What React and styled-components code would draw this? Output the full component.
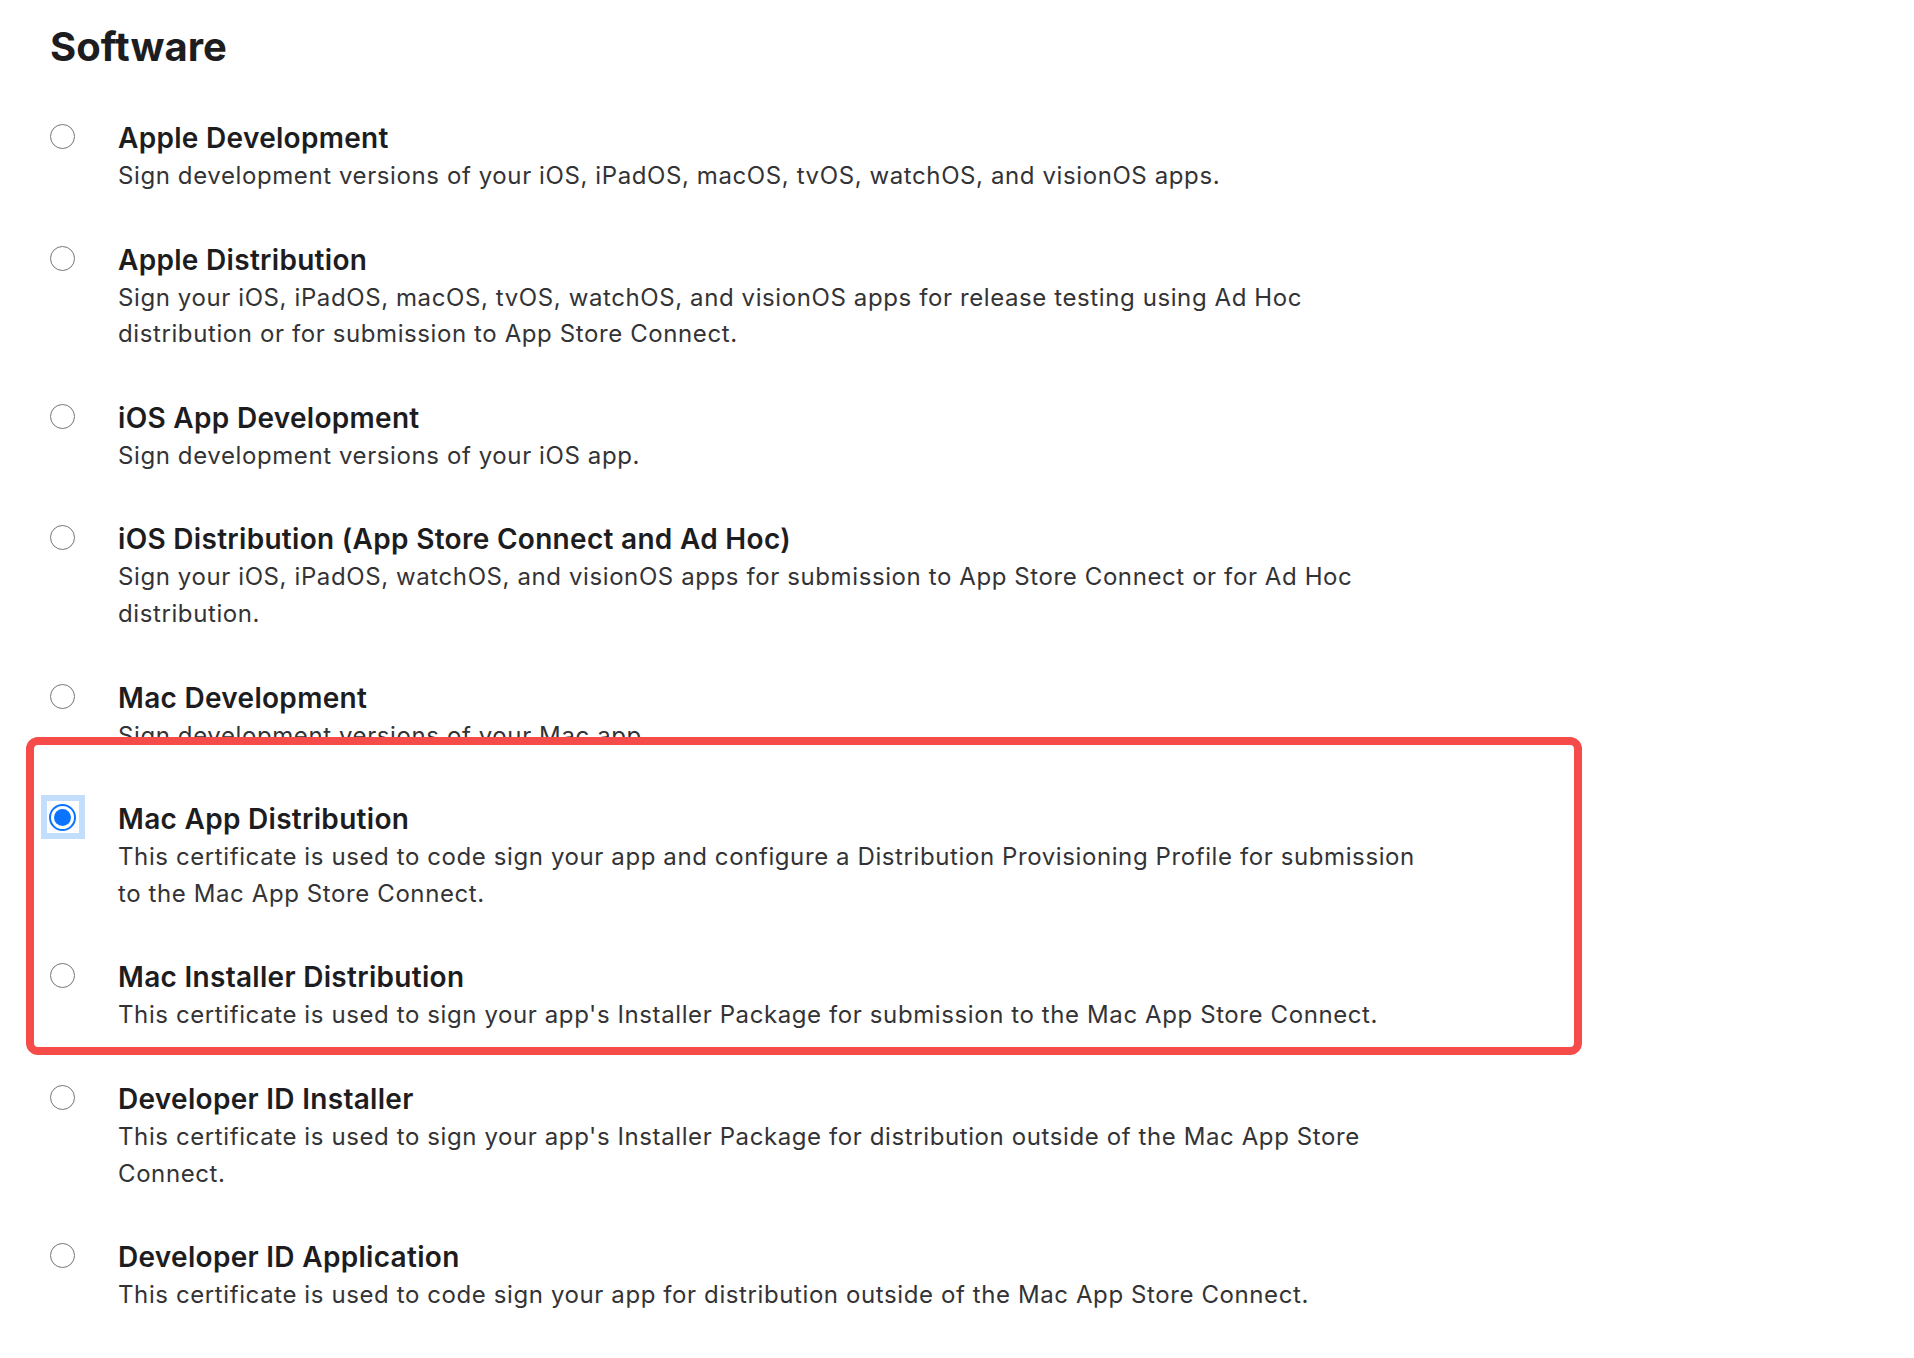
import styled, { createGlobalStyle } from "styled-components";

const GlobalStyle = createGlobalStyle`
    html, body {
        margin: 0;
        padding: 0;
        background: #fff;
    }

    body {
        font-family: Inter, "Noto Sans", "Liberation Sans", sans-serif;
        color: #1d1d1f;
        -webkit-font-smoothing: antialiased;
    }
`;

const Page = styled.div`
    width: 1914px;
    min-height: 1358px;
    padding: 22px 0 0 50px;
    box-sizing: border-box;
`;

const Heading = styled.h2`
    margin: 0 0 46px 0;
    font-size: 40px;
    line-height: 50px;
    font-weight: 700;
    color: #1d1d1f;
`;

const List = styled.div`
    display: flex;
    flex-direction: column;
    gap: 45px;
`;

const Highlight = styled.div`
    position: relative;
    display: flex;
    flex-direction: column;
    gap: 45px;
    width: 1556px;
    box-sizing: border-box;
    margin: -62px 0 -21px -24px;
    padding: 54px 0 13px 16px;
    background: #fff;
    border: 8px solid #f54b49;
    border-radius: 12px;
`;

const Row = styled.label`
    display: flex;
    align-items: flex-start;
    gap: 43px;
    cursor: pointer;
`;

const RadioSlot = styled.span`
    flex: 0 0 25px;
    min-width: 0;
    height: 25px;
    margin-top: 6px;
    display: flex;
    align-items: center;
    justify-content: center;
    position: relative;
`;

const Focus = styled.span`
    position: absolute;
    left: -9px;
    top: -10px;
    width: 44px;
    height: 44px;
    box-sizing: border-box;
    background: #fff;
    border: 6px solid #c3defd;
`;

const Radio = styled.span`
    position: relative;
    flex: none;
    width: ${(p) => (p.checked ? 27 : 25)}px;
    height: ${(p) => (p.checked ? 27 : 25)}px;
    box-sizing: border-box;
    border-radius: 50%;
    border: ${(p) => (p.checked ? "2px solid #0a74ff" : "1.8px solid #767676")};
    background: #fff;
    display: flex;
    align-items: center;
    justify-content: center;

    &::after {
        content: "";
        display: ${(p) => (p.checked ? "block" : "none")};
        width: 17px;
        height: 17px;
        border-radius: 50%;
        background: #0a74ff;
    }
`;

const Text = styled.div`
    display: flex;
    flex-direction: column;
`;

const Title = styled.div`
    font-size: 28px;
    line-height: 40px;
    font-weight: 600;
    letter-spacing: 0.3px;
    color: #1d1d1f;
`;

const Desc = styled.div`
    font-size: 24px;
    line-height: 36.6px;
    font-weight: 400;
    letter-spacing: 0.6px;
    color: #333336;
`;

const certs = [
    {
        title: "Apple Development",
        lines: ["Sign development versions of your iOS, iPadOS, macOS, tvOS, watchOS, and visionOS apps."],
    },
    {
        title: "Apple Distribution",
        lines: [
            "Sign your iOS, iPadOS, macOS, tvOS, watchOS, and visionOS apps for release testing using Ad Hoc",
            "distribution or for submission to App Store Connect.",
        ],
    },
    {
        title: "iOS App Development",
        lines: ["Sign development versions of your iOS app."],
    },
    {
        title: "iOS Distribution (App Store Connect and Ad Hoc)",
        lines: [
            "Sign your iOS, iPadOS, watchOS, and visionOS apps for submission to App Store Connect or for Ad Hoc",
            "distribution.",
        ],
    },
    {
        title: "Mac Development",
        lines: ["Sign development versions of your Mac app."],
    },
    {
        title: "Mac App Distribution",
        lines: [
            "This certificate is used to code sign your app and configure a Distribution Provisioning Profile for submission",
            "to the Mac App Store Connect.",
        ],
        checked: true,
        marked: true,
    },
    {
        title: "Mac Installer Distribution",
        lines: ["This certificate is used to sign your app's Installer Package for submission to the Mac App Store Connect."],
        marked: true,
    },
    {
        title: "Developer ID Installer",
        lines: [
            "This certificate is used to sign your app's Installer Package for distribution outside of the Mac App Store",
            "Connect.",
        ],
    },
    {
        title: "Developer ID Application",
        lines: ["This certificate is used to code sign your app for distribution outside of the Mac App Store Connect."],
    },
];

function CertRow({ el }) {
    return (
        <Row>
            <RadioSlot>
                {el.checked && <Focus />}
                <Radio checked={el.checked} />
            </RadioSlot>
            <Text>
                <Title>{el.title}</Title>
                {el.lines.map((line) => (
                    <Desc key={line}>{line}</Desc>
                ))}
            </Text>
        </Row>
    );
}

export default function App() {
    const before = certs.slice(0, 5);
    const marked = certs.filter((c) => c.marked);
    const after = certs.slice(7);

    return (
        <>
            <GlobalStyle />
            <Page>
                <Heading>Software</Heading>
                <List>
                    {before.map((el) => (
                        <CertRow key={el.title} el={el} />
                    ))}
                    <Highlight>
                        {marked.map((el) => (
                            <CertRow key={el.title} el={el} />
                        ))}
                    </Highlight>
                    {after.map((el) => (
                        <CertRow key={el.title} el={el} />
                    ))}
                </List>
            </Page>
        </>
    );
}
